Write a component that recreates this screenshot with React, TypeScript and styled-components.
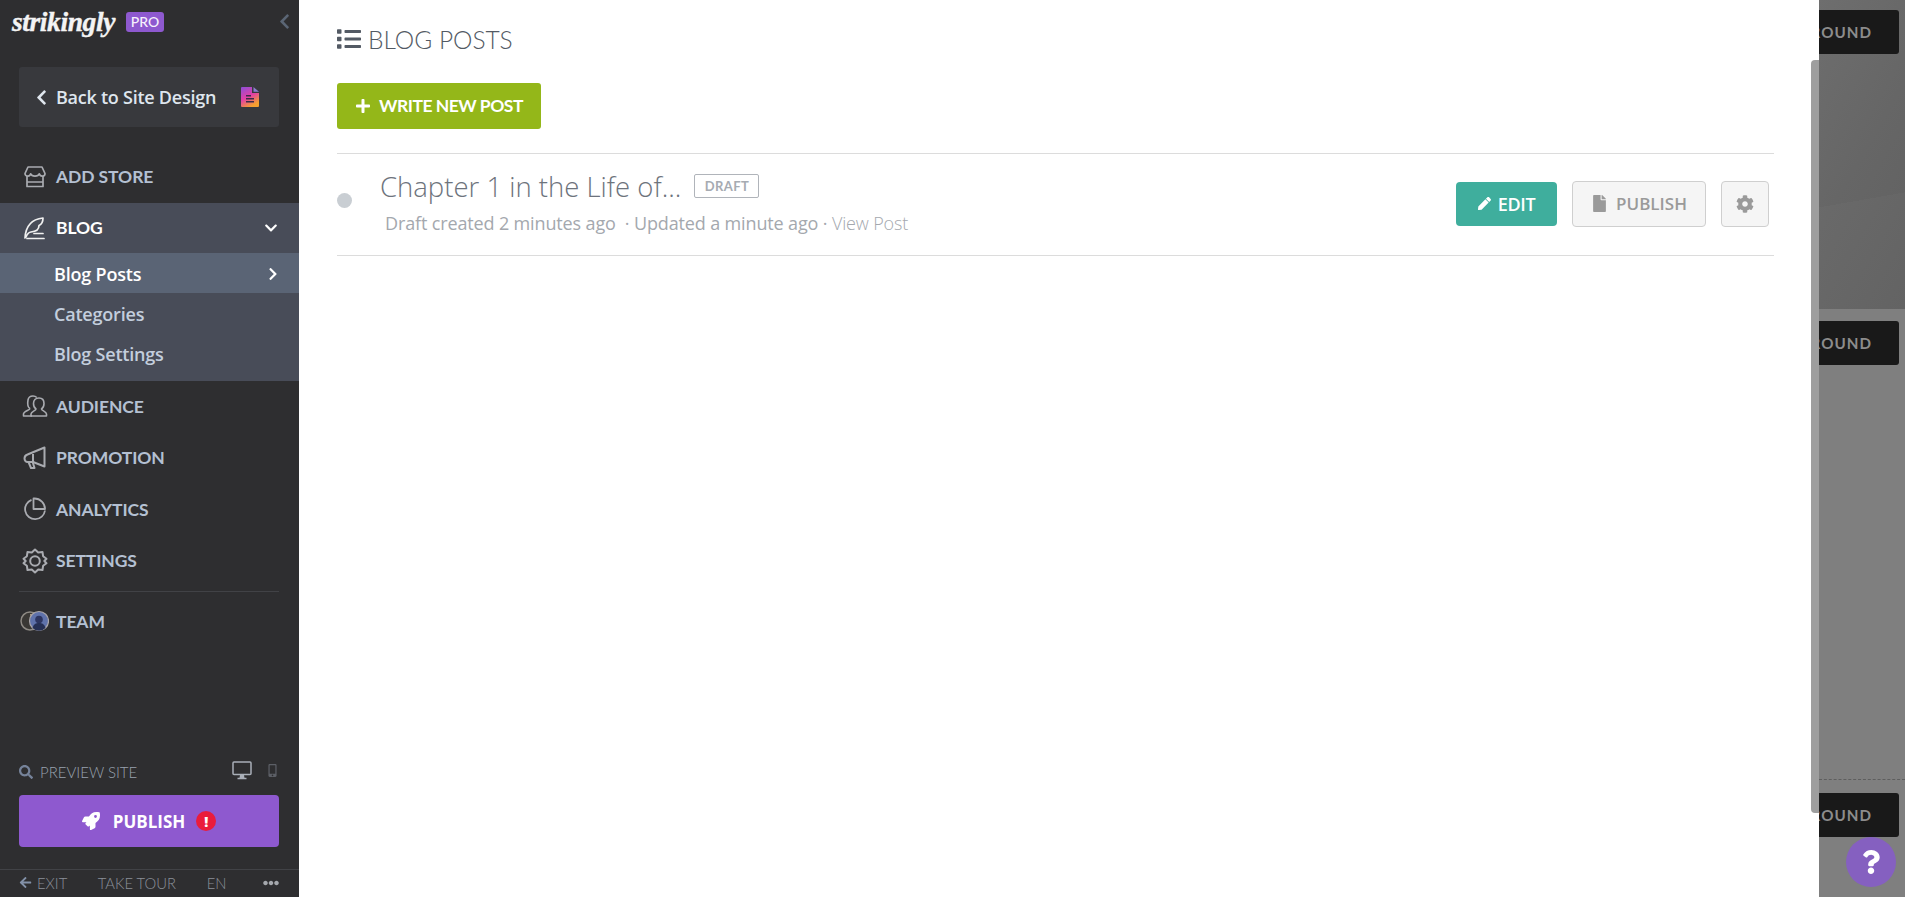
import React from 'react';
import styled, { createGlobalStyle } from 'styled-components';
import {
  FaArrowLeft,
  FaChevronDown,
  FaChevronLeft,
  FaChevronRight,
  FaCog,
  FaEllipsisH,
  FaFile,
  FaList,
  FaMobileAlt,
  FaPen,
  FaPlus,
  FaQuestion,
  FaRocket,
  FaSearch,
} from 'react-icons/fa';

const GlobalStyle = createGlobalStyle`
  html, body {
    margin: 0;
    padding: 0;
    height: 100%;
    overflow: hidden;
    background: #fff;
  }
  * { box-sizing: border-box; }
`;

const StoreIcon = () => (
  <svg width="24" height="24" viewBox="0 0 24 24" fill="none" stroke="currentColor" strokeWidth="1.7" strokeLinejoin="round">
    <path d="M5 2h14l3 6.500c0 1.600-1.300 2.700-2.800 2.700S16.600 10 16.300 8.800c-.4 1.300-2 2.400-4.300 2.400S8.100 10.100 7.700 8.800C7.400 10 6.300 11.200 4.800 11.200S2 10.100 2 8.500z" />
    <path d="M4 11v10.500h16V11M4 17h16" />
  </svg>
);

const QuillIcon = () => (
  <svg width="24" height="24" viewBox="0 0 24 24" fill="none" stroke="currentColor" strokeWidth="1.7" strokeLinecap="round" strokeLinejoin="round">
    <path d="M2 22C2.500 13 6 3.500 20 2c0 4-1.500 6.500-4 7.500 0 3-2.500 6-8 6.500-2 .2-3.500 1.500-5 5" />
    <path d="M11 17.500h9M4 22.500h17" />
  </svg>
);

const AudienceIcon = () => (
  <svg width="26" height="24" viewBox="0 0 26 24" fill="none" stroke="currentColor" strokeWidth="1.600" strokeLinejoin="round">
    <path d="M8 14.500C5 13 5.500 9 6 6c.4-2.500 2.500-4 5-4 1.500 0 2.800.5 3.800 1.500" />
    <path d="M8 14.500c0 1.500-6.500 3-6.500 5.500v2H10" />
    <path d="M17 4c3.500 0 5 2.500 5 5.500 0 2.500-1 4.500-2.500 5.500 0 1.500 5 2.500 5 5v2H9v-2c0-2.500 5-3.500 5-5-1.500-1-2.500-3-2.500-5.500C11.500 6.500 13.500 4 17 4z" />
  </svg>
);

const MegaphoneIcon = () => (
  <svg width="24" height="24" viewBox="0 0 24 24" fill="none" stroke="currentColor" strokeWidth="2" strokeLinejoin="round">
    <path d="M21.500 1.500v19L10 16H4.500C3 16 1.500 14.500 1.500 12.500S3 9 4.500 8.500L21.500 1.500z" />
    <path d="M10 8v8M5.500 16l2.500 6h3.500l-2-6.500" />
  </svg>
);

const PieIcon = () => (
  <svg width="24" height="24" viewBox="0 0 24 24" fill="none" stroke="currentColor" strokeWidth="1.800" strokeLinejoin="round">
    <path d="M22 13.500A10 10 0 1 1 8.500 2.800" />
    <path d="M10.500 1.500h1a10.500 10.500 0 0 1 10.500 10.500H10.500z" />
  </svg>
);

const GearIcon = () => (
  <svg width="26" height="26" viewBox="0 0 26 26" fill="none" stroke="currentColor" strokeWidth="2" strokeLinejoin="round">
    <path d="M13 1.500l3.200 2.900 4.300-.4.600 4.200 3.400 2.600L22.300 13l2.200 2.200-3.400 2.600-.6 4.200-4.300-.4-3.200 2.900-3.200-2.900-4.300.4-.6-4.200-3.400-2.600L3.700 13l-2.200-2.200 3.400-2.600.6-4.200 4.300.4z" />
    <circle cx="13" cy="13" r="4.800" />
  </svg>
);

const DocIcon = () => (
  <svg width="18" height="20" viewBox="0 0 18 20">
    <defs>
      <linearGradient id="docGrad" x1="0" y1="0" x2="0.5" y2="1">
        <stop offset="0" stopColor="#8a4fd8" />
        <stop offset="0.55" stopColor="#e23fa6" />
        <stop offset="1" stopColor="#f5a02f" />
      </linearGradient>
    </defs>
    <path d="M1 0h10v6h7v13a1 1 0 0 1-1 1H1a1 1 0 0 1-1-1V1a1 1 0 0 1 1-1z" fill="url(#docGrad)" />
    <path d="M12.500 0L18 4.800h-5.500z" fill="#8b7fd0" />
    <path d="M5 8h5v1.500H5zM5 11h8v1.500H5zM5 14h8v1.500H5z" fill="#3a2a4a" />
  </svg>
);

const TeamAvatars = () => (
  <svg width="30" height="24" viewBox="0 0 30 24">
    <circle cx="11" cy="12" r="9" fill="#3a3835" stroke="#8e8a84" strokeWidth="1.500" />
    <path d="M11 5a7 7 0 0 1 4 13c-3-2-3-9-4-13z" fill="#b79f84" />
    <circle cx="20" cy="12" r="9.500" fill="#5f72ab" stroke="#a9a5a8" strokeWidth="1.200" />
    <circle cx="20" cy="10.500" r="3.800" fill="#2d3560" />
    <path d="M13.500 19c1-4 3.500-5 6.500-5s5.500 1 6.500 5a9 9 0 0 1-13 0z" fill="#263055" />
  </svg>
);

const navTop = [
  { label: 'ADD STORE', icon: <StoreIcon /> },
];
const navBottom = [
  { label: 'AUDIENCE', icon: <AudienceIcon /> },
  { label: 'PROMOTION', icon: <MegaphoneIcon /> },
  { label: 'ANALYTICS', icon: <PieIcon /> },
  { label: 'SETTINGS', icon: <GearIcon /> },
];

export default function App() {
  return (
    <Page>
      <GlobalStyle />
      <Sidebar>
        <LogoRow>
          <Logo>strikingly</Logo>
          <ProBadge>PRO</ProBadge>
          <Collapse>
            <FaChevronLeft />
          </Collapse>
        </LogoRow>

        <BackBox>
          <FaChevronLeft size={17} />
          <BackLabel>Back to Site Design</BackLabel>
          <DocIcon />
        </BackBox>

        <Nav>
          {navTop.map((item) => (
            <NavRow key={item.label}>
              <NavIcon>{item.icon}</NavIcon>
              {item.label}
            </NavRow>
          ))}
          <BlogGroup>
            <BlogHead>
              <NavIcon>
                <QuillIcon />
              </NavIcon>
              BLOG
              <HeadChevron>
                <FaChevronDown size={14} />
              </HeadChevron>
            </BlogHead>
            <SubRow $active>
              Blog Posts
              <FaChevronRight size={14} />
            </SubRow>
            <SubRow>Categories</SubRow>
            <SubRow>Blog Settings</SubRow>
          </BlogGroup>
          {navBottom.map((item) => (
            <NavRow key={item.label}>
              <NavIcon>{item.icon}</NavIcon>
              {item.label}
            </NavRow>
          ))}
          <NavDivider />
          <TeamRow>
            <NavIcon>
              <TeamAvatars />
            </NavIcon>
            TEAM
          </TeamRow>
        </Nav>

        <PreviewRow>
          <FaSearch size={14} color="#76839a" />
          <PreviewLabel>PREVIEW SITE</PreviewLabel>
          <DeviceIcons>
            <svg width="20" height="19" viewBox="0 0 20 19" fill="none">
              <rect x="1" y="1" width="18" height="12.500" rx="1" stroke="#a9afb8" strokeWidth="1.500" />
              <path d="M8 14h4l.5 3H7.500z" fill="#a9afb8" />
              <path d="M5.500 17.500h9" stroke="#a9afb8" strokeWidth="1.500" />
            </svg>
            <FaMobileAlt size={13} color="#5c5f66" />
          </DeviceIcons>
        </PreviewRow>

        <PublishButton>
          <FaRocket size={18} />
          <span>PUBLISH</span>
          <AlertDot>!</AlertDot>
        </PublishButton>

        <Footer>
          <FooterItem>
            <FaArrowLeft size={13} color="#8391a8" />
            EXIT
          </FooterItem>
          <FooterItem>TAKE TOUR</FooterItem>
          <FooterItem>EN</FooterItem>
          <FooterDots>
            <FaEllipsisH size={16} color="#a5a8ad" />
          </FooterDots>
        </Footer>
      </Sidebar>

      <Main>
        <Heading>
          <FaList size={24} />
          BLOG POSTS
        </Heading>
        <WriteButton>
          <FaPlus size={16} />
          WRITE NEW POST
        </WriteButton>
        <PostRow>
          <StatusDot />
          <PostBody>
            <TitleLine>
              <PostTitle>Chapter 1 in the Life of...</PostTitle>
              <DraftTag>DRAFT</DraftTag>
            </TitleLine>
            <MetaLine>
              Draft created 2 minutes ago&nbsp; · Updated a minute ago · <ViewLink>View Post</ViewLink>
            </MetaLine>
          </PostBody>
          <EditButton>
            <FaPen size={13} />
            EDIT
          </EditButton>
          <GhostButton>
            <FaFile size={17} />
            PUBLISH
          </GhostButton>
          <GearButton>
            <FaCog size={18} />
          </GearButton>
        </PostRow>
        <Scrollbar />
      </Main>

      <Backdrop>
        <HeroStrip>
          <BgButton>EDIT BACKGROUND</BgButton>
        </HeroStrip>
        <PlainStrip>
          <BgButton>EDIT BACKGROUND</BgButton>
        </PlainStrip>
        <DashedStrip>
          <BgButton>EDIT BACKGROUND</BgButton>
        </DashedStrip>
        <HelpBubble>
          <FaQuestion size={24} />
        </HelpBubble>
      </Backdrop>
    </Page>
  );
}

const Page = styled.div`
  display: flex;
  width: 1905px;
  height: 897px;
  overflow: hidden;
  font-family: 'Open Sans', 'Liberation Sans', sans-serif;
`;

const Sidebar = styled.aside`
  display: flex;
  flex-direction: column;
  flex: 0 0 299px;
  height: 100%;
  background: #2e2e30;
`;

const LogoRow = styled.div`
  display: flex;
  align-items: center;
  height: 43px;
  padding: 0 6px 0 12px;
`;

const Logo = styled.div`
  width: 114px;
  font-family: 'Liberation Serif', serif;
  font-size: 27.500px;
  font-style: italic;
  font-weight: 700;
  letter-spacing: -0.4px;
  -webkit-text-stroke: 0.4px #f4f4f4;
  color: #f4f4f4;
`;

const ProBadge = styled.div`
  display: flex;
  align-items: center;
  justify-content: center;
  width: 38px;
  height: 20px;
  border-radius: 3px;
  background: #8e59cf;
  color: #f6f0fc;
  font-family: 'Lato', sans-serif;
  font-size: 14px;
  font-weight: 500;
`;

const Collapse = styled.div`
  display: flex;
  margin-left: auto;
  color: #5b6675;
  font-size: 17px;
`;

const BackBox = styled.div`
  display: flex;
  align-items: center;
  height: 60px;
  margin: 24px 20px 0 19px;
  padding: 0 20px 0 14px;
  border-radius: 3px;
  background: #38393d;
  color: #dfe6ee;
`;

const BackLabel = styled.span`
  flex: 1;
  margin-left: 6px;
  font-size: 18px;
  font-weight: 600;
  letter-spacing: -0.25px;
`;

const Nav = styled.nav`
  display: flex;
  flex-direction: column;
  margin-top: 24px;
`;

const NavRow = styled.div`
  display: flex;
  align-items: center;
  height: 51.500px;
  padding-left: 22px;
  font-family: 'Lato', sans-serif;
  font-size: 17.500px;
  font-weight: 700;
  letter-spacing: -0.1px;
  color: #b4c0d2;
`;

const NavIcon = styled.span`
  display: flex;
  align-items: center;
  justify-content: center;
  width: 27px;
  margin-right: 8px;
  margin-left: -1px;
  color: #a9abb0;
`;

const BlogGroup = styled.div`
  display: flex;
  flex-direction: column;
  background: #484c58;
`;

const BlogHead = styled(NavRow)`
  height: 50px;
  color: #fff;

  ${NavIcon} {
    color: #f0f0f0;
  }
`;

const HeadChevron = styled.span`
  display: flex;
  margin-left: auto;
  margin-right: 21px;
`;

const SubRow = styled.div<{ $active?: boolean }>`
  display: flex;
  align-items: center;
  justify-content: space-between;
  height: 40px;
  padding: 2px 19px 0 54px;
  background: ${(p) => (p.$active ? '#5a6475' : 'transparent')};
  color: ${(p) => (p.$active ? '#fff' : '#c3cedd')};
  font-size: 18px;
  font-weight: 600;
  letter-spacing: -0.2px;

  &:last-child {
    height: 48px;
    padding-bottom: 8px;
  }
`;

const NavDivider = styled.div`
  height: 1px;
  margin: 4px 20px 0 19px;
  background: #414246;
`;

const TeamRow = styled(NavRow)`
  height: 58px;
  padding: 1px 0 0 19px;

  ${NavIcon} {
    width: 30px;
    margin-right: 7px;
    margin-left: 0;
  }
`;

const PreviewRow = styled.div`
  display: flex;
  align-items: center;
  margin-top: auto;
  height: 24px;
  padding: 2px 20px 0 19px;
`;

const PreviewLabel = styled.span`
  flex: 1;
  margin-left: 7px;
  font-family: 'Lato', sans-serif;
  font-size: 15px;
  font-weight: 300;
  color: #98a1ae;
`;

const DeviceIcons = styled.div`
  display: flex;
  align-items: center;
  gap: 14px;
  margin-top: -3px;
`;

const PublishButton = styled.button`
  display: flex;
  align-items: center;
  justify-content: center;
  gap: 13px;
  height: 52px;
  margin: 12px 20px 0 19px;
  border: 0;
  border-radius: 4px;
  background: #8e59cf;
  color: #fff;
  font-family: 'Open Sans', sans-serif;
  font-size: 17px;
  font-weight: 700;
`;

const AlertDot = styled.span`
  display: flex;
  align-items: center;
  justify-content: center;
  width: 20px;
  height: 20px;
  margin-left: -2px;
  border-radius: 50%;
  background: #ea1c3c;
  color: #fff;
  font-size: 14px;
  font-weight: 800;
`;

const Footer = styled.footer`
  display: flex;
  align-items: center;
  justify-content: space-between;
  height: 28px;
  margin-top: 22px;
  padding: 0 20px 2px 19px;
  border-top: 1px solid #414246;
`;

const FooterItem = styled.span`
  display: flex;
  align-items: center;
  gap: 5px;
  font-family: 'Lato', sans-serif;
  font-size: 14.800px;
  font-weight: 300;
  color: #8b9099;
`;

const FooterDots = styled(FooterItem)`
  margin-left: 6px;
`;

const Main = styled.main`
  position: relative;
  display: flex;
  flex-direction: column;
  flex: 0 0 1520px;
  height: 100%;
  padding: 0 45px 0 38px;
  background: #fff;
`;

const Heading = styled.h1`
  display: flex;
  align-items: center;
  gap: 7px;
  height: 34px;
  margin: 22px 0 0;
  font-family: 'Lato', sans-serif;
  font-size: 24.500px;
  font-weight: 300;
  color: #535a64;
`;

const WriteButton = styled.button`
  display: flex;
  align-items: center;
  justify-content: center;
  gap: 8px;
  width: 204px;
  height: 46px;
  margin-top: 27px;
  padding-bottom: 2px;
  border: 0;
  border-radius: 3px;
  background: #94b719;
  color: #fff;
  font-family: 'Lato', sans-serif;
  font-size: 17.500px;
  font-weight: 700;
  letter-spacing: -0.5px;
`;

const PostRow = styled.div`
  display: flex;
  align-items: center;
  height: 103px;
  margin-top: 24px;
  padding: 0 5px 2px 0;
  border-top: 1px solid #dcdcdc;
  border-bottom: 1px solid #dcdcdc;
`;

const StatusDot = styled.span`
  flex: 0 0 15px;
  height: 15px;
  margin: 0 28px 6px 0;
  border-radius: 50%;
  background: #c9ced3;
`;

const PostBody = styled.div`
  display: flex;
  flex-direction: column;
  flex: 1;
  margin-top: -4px;
`;

const TitleLine = styled.div`
  display: flex;
  align-items: center;
  gap: 13px;
  margin-top: -1px;
`;

const PostTitle = styled.span`
  font-size: 27.500px;
  font-weight: 300;
  color: #6d737c;
`;

const DraftTag = styled.span`
  display: flex;
  align-items: center;
  justify-content: center;
  width: 65px;
  height: 24px;
  border: 1px solid #b0b4ba;
  border-radius: 2px;
  font-family: 'Lato', sans-serif;
  font-size: 13px;
  font-weight: 700;
  letter-spacing: 0.4px;
  color: #a6abb2;
`;

const MetaLine = styled.div`
  margin: 6px 0 0 5px;
  font-size: 18px;
  letter-spacing: -0.14px;
  color: #a4a8ae;
`;

const ViewLink = styled.span`
  font-weight: 300;
`;

const EditButton = styled.button`
  display: flex;
  align-items: center;
  justify-content: center;
  gap: 7px;
  width: 101px;
  height: 44px;
  margin-right: 15px;
  padding-bottom: 1px;
  border: 0;
  border-radius: 4px;
  background: #3fae9d;
  color: #fff;
  font-family: 'Open Sans', sans-serif;
  font-size: 18px;
  font-weight: 600;
  letter-spacing: -0.3px;
`;

const GhostButton = styled.button`
  display: flex;
  align-items: center;
  justify-content: center;
  gap: 8px;
  width: 134px;
  height: 46px;
  margin-right: 15px;
  border: 1px solid #cfcfcf;
  border-radius: 4px;
  background: #f5f5f5;
  color: #9a9a9a;
  font-family: 'Open Sans', sans-serif;
  font-size: 17px;
  font-weight: 600;
`;

const GearButton = styled(GhostButton)`
  width: 48px;
  margin-right: 0;
`;

const Scrollbar = styled.div`
  position: absolute;
  top: 60px;
  right: 0;
  width: 8px;
  height: 753px;
  border-radius: 4px 0 0 4px;
  background: #9e9e9e;
`;

const Backdrop = styled.div`
  position: relative;
  display: flex;
  flex-direction: column;
  flex: 1;
  height: 100%;
  overflow: hidden;
  background: #7f7f7f;
`;

const Strip = styled.div`
  display: flex;
  justify-content: flex-end;
  align-items: flex-start;
  padding-right: 6px;
`;

const HeroStrip = styled(Strip)`
  height: 309px;
  padding-top: 10px;
  background:
    linear-gradient(170deg, transparent 64%, rgba(255, 255, 255, 0.02) 64%),
    linear-gradient(120deg, #6e6e6e 0%, #666 50%, #606060 100%);
`;

const PlainStrip = styled(Strip)`
  height: 471px;
  padding-top: 12px;
  border-bottom: 1px dashed #5e5e5e;
`;

const DashedStrip = styled(Strip)`
  padding-top: 13px;
`;

const BgButton = styled.div`
  display: flex;
  align-items: center;
  flex: none;
  height: 44px;
  padding: 0 27px 0 20px;
  border-radius: 3px;
  background: #191919;
  color: #8c8c8c;
  font-family: 'Lato', sans-serif;
  font-size: 15.200px;
  font-weight: 700;
  letter-spacing: 1px;
  white-space: nowrap;
`;

const HelpBubble = styled.div`
  position: absolute;
  right: 9px;
  bottom: 10px;
  display: flex;
  align-items: center;
  justify-content: center;
  width: 50px;
  height: 50px;
  border-radius: 50%;
  background: #8560c0;
  color: #fff;
`;
